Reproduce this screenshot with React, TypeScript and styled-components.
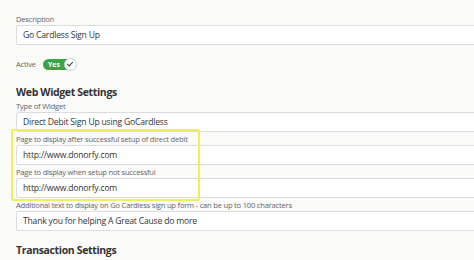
import React from "react";
import styled, { createGlobalStyle } from "styled-components";

const Global = createGlobalStyle`
  html, body { margin: 0; padding: 0; background: #fafaf9; }
  body { font-family: "Open Sans", "Noto Sans", sans-serif; color: #333; overflow: hidden; }
`;

const Page = styled.div`
  width: 474px;
  height: 260px;
  padding: 12px 0 0 16px;
  box-sizing: border-box;
  overflow: hidden;
  display: flex;
  flex-direction: column;
`;

const Label = styled.div`
  font-size: 7.6px;
  letter-spacing: -0.22px;
  line-height: 12px;
  color: #666;
  white-space: nowrap;
  margin-top: 1px;
`;

const Input = styled.div`
  height: 20px;
  box-sizing: border-box;
  width: 470px;
  background: #fff;
  border: 1px solid #dcdcdc;
  border-radius: 2px;
  padding: 0 6px;
  display: flex;
  align-items: center;
  font-size: 8.6px;
  letter-spacing: -0.2px;
  color: #333;
  white-space: nowrap;
`;

const Field = styled.div`
  display: flex;
  flex-direction: column;
`;

const ActiveRow = styled.div`
  display: flex;
  align-items: center;
  gap: 7px;
  margin-top: 12px;
  height: 14px;
`;

const SmallText = styled.span`
  font-size: 7.6px;
  letter-spacing: -0.2px;
  color: #666;
`;

const Toggle = styled.div`
  display: flex;
  align-items: center;
`;

const Pill = styled.div`
  height: 11px;
  width: 29px;
  margin-right: -8px;
  padding-left: 5px;
  box-sizing: border-box;
  border-radius: 6px;
  background: #3aa546;
  color: #fff;
  font-size: 7px;
  font-weight: 700;
  display: flex;
  align-items: center;
`;

const Knob = styled.div`
  width: 13px;
  height: 13px;
  border-radius: 50%;
  background: #fff;
  border: 1px solid #cfcfcf;
  box-sizing: border-box;
  display: flex;
  align-items: center;
  justify-content: center;
  position: relative;
`;

const Heading = styled.h2<{ $top: number }>`
  margin: ${(p) => p.$top}px 0 0 0;
  font-size: 10.5px;
  letter-spacing: -0.35px;
  line-height: 14px;
  font-weight: 700;
  color: #333;
`;

const HighlightGroup = styled.div`
  position: relative;
  display: flex;
  flex-direction: column;
`;

const HighlightBox = styled.div`
  position: absolute;
  left: -5px;
  top: -3px;
  width: 189px;
  height: 72px;
  box-sizing: border-box;
  border: 2px solid #efee5c;
  border-radius: 2px;
  pointer-events: none;
`;

export default function App() {
  return (
    <>
      <Global />
      <Page>
        <Field>
          <Label>Description</Label>
          <Input>Go Cardless Sign Up</Input>
        </Field>
        <ActiveRow>
          <SmallText>Active</SmallText>
          <Toggle>
            <Pill>Yes</Pill>
            <Knob>
              <svg width="8" height="8" viewBox="0 0 8 8">
                <path d="M1.5 4.2 L3.2 5.8 L6.5 2.3" fill="none" stroke="#444" strokeWidth="1.1" strokeLinecap="round" strokeLinejoin="round" />
              </svg>
            </Knob>
          </Toggle>
        </ActiveRow>
        <Heading $top={14}>Web Widget Settings</Heading>
        <Field>
          <Label>Type of Widget</Label>
          <Input>Direct Debit Sign Up using GoCardless</Input>
        </Field>
        <HighlightGroup>
          <Field>
            <Label>Page to display after successful setup of direct debit</Label>
            <Input>http://www.donorfy.com</Input>
          </Field>
          <Field>
            <Label>Page to display when setup not successful</Label>
            <Input>http://www.donorfy.com</Input>
          </Field>
          <HighlightBox />
        </HighlightGroup>
        <Field>
          <Label>Additional text to display on Go Cardless sign up form - can be up to 100 characters</Label>
          <Input>Thank you for helping A Great Cause do more</Input>
        </Field>
        <Heading $top={12}>Transaction Settings</Heading>
      </Page>
    </>
  );
}
